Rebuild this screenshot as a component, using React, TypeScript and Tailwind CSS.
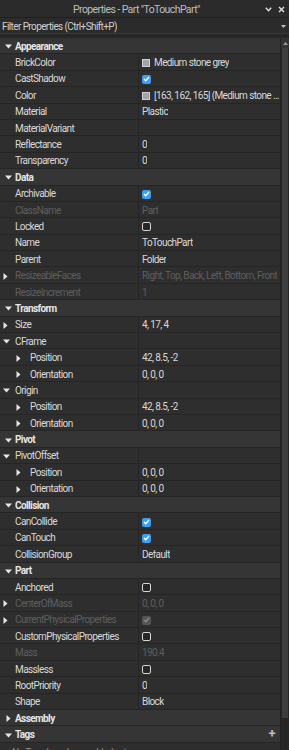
import { ReactNode } from "react";

type Check = "on" | "off" | "dis";

type Row =
  | { kind: "header"; label: string; open: boolean; plus?: boolean }
  | {
      kind: "prop";
      label: string;
      value?: string;
      indent?: boolean;
      expand?: "open" | "closed";
      disabled?: boolean;
      check?: Check;
      swatch?: boolean;
    };

const rows: Row[] = [
  { kind: "header", label: "Appearance", open: true },
  { kind: "prop", label: "BrickColor", value: "Medium stone grey", swatch: true },
  { kind: "prop", label: "CastShadow", check: "on" },
  { kind: "prop", label: "Color", value: "[163, 162, 165] (Medium stone ...", swatch: true },
  { kind: "prop", label: "Material", value: "Plastic" },
  { kind: "prop", label: "MaterialVariant", value: "" },
  { kind: "prop", label: "Reflectance", value: "0" },
  { kind: "prop", label: "Transparency", value: "0" },
  { kind: "header", label: "Data", open: true },
  { kind: "prop", label: "Archivable", check: "on" },
  { kind: "prop", label: "ClassName", value: "Part", disabled: true },
  { kind: "prop", label: "Locked", check: "off" },
  { kind: "prop", label: "Name", value: "ToTouchPart" },
  { kind: "prop", label: "Parent", value: "Folder" },
  { kind: "prop", label: "ResizeableFaces", value: "Right, Top, Back, Left, Bottom, Front", disabled: true, expand: "closed" },
  { kind: "prop", label: "ResizeIncrement", value: "1", disabled: true },
  { kind: "header", label: "Transform", open: true },
  { kind: "prop", label: "Size", value: "4, 17, 4", expand: "closed" },
  { kind: "prop", label: "CFrame", value: "", expand: "open" },
  { kind: "prop", label: "Position", value: "42, 8.5, -2", indent: true, expand: "closed" },
  { kind: "prop", label: "Orientation", value: "0, 0, 0", indent: true, expand: "closed" },
  { kind: "prop", label: "Origin", value: "", expand: "open" },
  { kind: "prop", label: "Position", value: "42, 8.5, -2", indent: true, expand: "closed" },
  { kind: "prop", label: "Orientation", value: "0, 0, 0", indent: true, expand: "closed" },
  { kind: "header", label: "Pivot", open: true },
  { kind: "prop", label: "PivotOffset", value: "", expand: "open" },
  { kind: "prop", label: "Position", value: "0, 0, 0", indent: true, expand: "closed" },
  { kind: "prop", label: "Orientation", value: "0, 0, 0", indent: true, expand: "closed" },
  { kind: "header", label: "Collision", open: true },
  { kind: "prop", label: "CanCollide", check: "on" },
  { kind: "prop", label: "CanTouch", check: "on" },
  { kind: "prop", label: "CollisionGroup", value: "Default" },
  { kind: "header", label: "Part", open: true },
  { kind: "prop", label: "Anchored", check: "off" },
  { kind: "prop", label: "CenterOfMass", value: "0, 0, 0", disabled: true, expand: "closed" },
  { kind: "prop", label: "CurrentPhysicalProperties", check: "dis", disabled: true, expand: "closed" },
  { kind: "prop", label: "CustomPhysicalProperties", check: "off" },
  { kind: "prop", label: "Mass", value: "190.4", disabled: true },
  { kind: "prop", label: "Massless", check: "off" },
  { kind: "prop", label: "RootPriority", value: "0" },
  { kind: "prop", label: "Shape", value: "Block" },
  { kind: "header", label: "Assembly", open: false },
  { kind: "header", label: "Tags", open: true, plus: true },
];

function Down() {
  return (
    <svg width="7" height="5" viewBox="0 0 7 5">
      <path d="M0 0.5H7L3.5 4.5Z" fill="#e6e6e6" />
    </svg>
  );
}

function Right() {
  return (
    <svg width="5" height="7" viewBox="0 0 5 7">
      <path d="M0.5 0L4.5 3.5L0.5 7Z" fill="#e6e6e6" />
    </svg>
  );
}

function CheckBox({ state }: { state: Check }) {
  if (state === "off") {
    return <div className="w-[9px] h-[9px] rounded-[2px] border border-[#d6d6d6] bg-[#262626]" />;
  }
  const bg = state === "on" ? "bg-[#3aa0f5]" : "bg-[#555555]";
  const stroke = state === "on" ? "#ffffff" : "#8a8a8a";
  return (
    <div className={`w-[9px] h-[9px] rounded-[2px] ${bg} flex items-center justify-center`}>
      <svg width="7" height="6" viewBox="0 0 7 6">
        <path d="M1 3L2.8 4.8L6 1" stroke={stroke} strokeWidth="1.4" fill="none" />
      </svg>
    </div>
  );
}

function HeaderRow({ row }: { row: Extract<Row, { kind: "header" }> }) {
  return (
    <div className="h-[16.4px] pt-[2px] flex items-center bg-[#353535] border-b border-[#252525] relative">
      <div className="w-[15px] flex justify-center pl-[1px]">
        {row.open ? <Down /> : <Right />}
      </div>
      <span className="font-bold text-[#e6e6e6]">{row.label}</span>
      {row.plus && (
        <span className="absolute right-[5px] top-[1px] text-[13px] font-bold text-[#bdbdbd]">+</span>
      )}
    </div>
  );
}

function PropRow({ row }: { row: Extract<Row, { kind: "prop" }> }) {
  const txt = row.disabled ? "text-[#5e5e5e]" : "text-[#d9d9d9]";
  let value: ReactNode = null;
  if (row.check) {
    value = <CheckBox state={row.check} />;
  } else if (row.swatch) {
    value = (
      <div className="flex items-center gap-[4px] min-w-0">
        <div className="w-[8px] h-[8px] shrink-0 bg-[#a3a2a5] border border-[#d0d0d0]" />
        <span className={`${txt} whitespace-nowrap overflow-hidden`}>{row.value}</span>
      </div>
    );
  } else {
    value = <span className={`${txt} whitespace-nowrap overflow-hidden`}>{row.value}</span>;
  }
  return (
    <div className="h-[16.4px] flex border-b border-[#252525] bg-[#2e2e2e]">
      <div className="w-[139px] shrink-0 pt-[2px] flex items-center border-r border-[#252525]">
        <div className={`${row.indent ? "w-[30px] pl-[16px]" : "w-[15px] pl-[3px]"} flex items-center`}>
          {row.expand === "open" && <Down />}
          {row.expand === "closed" && <Right />}
        </div>
        <span className={`${txt} whitespace-nowrap`}>{row.label}</span>
      </div>
      <div className="flex-1 min-w-0 pt-[2px] flex items-center pl-[3px]">{value}</div>
    </div>
  );
}

export default function App() {
  return (
    <div
      className="w-[289px] h-[750px] overflow-hidden bg-[#2e2e2e] text-[10px] tracking-[-0.6px] leading-none select-none"
      style={{ fontFamily: "Roboto, 'Noto Sans', sans-serif" }}
    >
      <div className="h-[18px] pt-[2px] flex items-center bg-[#2b2b2b] border-b border-[#1f1f1f] relative">
        <span className="absolute left-[73px] top-[5px] text-[10.5px] text-[#bdbdbd]">
          Properties - Part "ToTouchPart"
        </span>
        <div className="ml-auto flex items-center gap-[6px] pr-[4px]">
          <svg width="7" height="5" viewBox="0 0 7 5">
            <path d="M0.8 0.8L3.5 3.8L6.2 0.8" stroke="#e0e0e0" strokeWidth="1.4" fill="none" />
          </svg>
          <svg width="7" height="7" viewBox="0 0 7 7">
            <path d="M1 1L6 6M6 1L1 6" stroke="#e0e0e0" strokeWidth="1.4" />
          </svg>
        </div>
      </div>
      <div className="h-[16px] pt-[2px] flex items-center bg-[#2b2b2b] border-b border-[#3a3a3a] pl-[2px] pr-[3px]">
        <span className="text-[#cfcfcf]">Filter Properties (Ctrl+Shift+P)</span>
        <svg width="5" height="3" viewBox="0 0 5 3" className="ml-auto">
          <path d="M0 0H5L2.5 3Z" fill="#bdbdbd" />
        </svg>
      </div>
      <div className="h-[4px] bg-[#262626]" />
      <div className="flex">
        <div className="flex-1 min-w-0">
          {rows.map((r, i) =>
            r.kind === "header" ? <HeaderRow key={i} row={r} /> : <PropRow key={i} row={r} />
          )}
          <div className="h-[16px] pt-[4px] flex items-center pl-[12px] text-[#8a8a8a]">
            No Tags have been added yet
          </div>
        </div>
        <div className="w-[9px] shrink-0 flex flex-col bg-[#262626] border-l border-[#222]">
          <div className="h-[10px] flex items-center justify-center bg-[#333]">
            <svg width="5" height="3" viewBox="0 0 5 3">
              <path d="M0 3H5L2.5 0Z" fill="#9a9a9a" />
            </svg>
          </div>
          <div className="h-[670px] bg-[#3d3d3d] mx-[1px]" />
        </div>
      </div>
    </div>
  );
}
